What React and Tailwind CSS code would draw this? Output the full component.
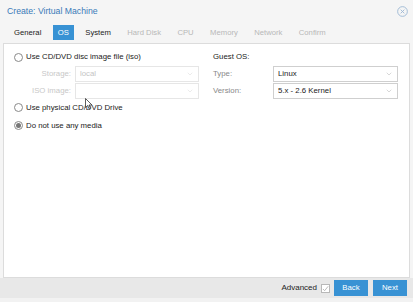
import { ChevronDown } from "lucide-react";

const tabs = [
  { label: "General", state: "done" },
  { label: "OS", state: "active" },
  { label: "System", state: "done" },
  { label: "Hard Disk", state: "off" },
  { label: "CPU", state: "off" },
  { label: "Memory", state: "off" },
  { label: "Network", state: "off" },
  { label: "Confirm", state: "off" },
];

function Radio({ checked, h, children }) {
  return (
    <label className={`flex items-center gap-[3px] ${h} text-[7.8px] text-[#222]`}>
      <span className="w-[9px] h-[9px] rounded-full border border-[#8a8a8a] bg-white flex items-center justify-center">
        {checked && <span className="w-[5px] h-[5px] rounded-full bg-[#777]" />}
      </span>
      {children}
    </label>
  );
}

function Combo({ value, disabled, w }) {
  return (
    <div
      className={`h-[16px] ${w} border flex items-center justify-between pl-[4px] pr-[4px] text-[7.8px] bg-white ${
        disabled ? "border-[#e6e6e6] text-[#c4c4c4]" : "border-[#cfcfcf] text-[#222]"
      }`}
    >
      <span>{value}</span>
      <ChevronDown size={8} strokeWidth={1.5} className={disabled ? "text-[#d8d8d8]" : "text-[#b0b0b0]"} />
    </div>
  );
}

export default function App() {
  return (
    <div
      className="w-[413px] h-[302px] bg-[#f5f5f5] flex flex-col relative overflow-hidden"
      style={{ fontFamily: "'Liberation Sans Narrow', 'Liberation Sans', Arial, sans-serif" }}
    >
      {/* title */}
      <div className="h-[22px] flex items-center justify-between pl-[7px] pr-[5px] pt-[1px]">
        <span className="text-[8.7px] text-[#3a7ab8]">Create: Virtual Machine</span>
        <svg width="11" height="11" viewBox="0 0 12 12" className="text-[#9db8d4]">
          <circle cx="6" cy="6" r="5.3" fill="none" stroke="currentColor" strokeWidth="1" />
          <path d="M4 4l4 4M8 4l-4 4" stroke="currentColor" strokeWidth="1" />
        </svg>
      </div>

      {/* tabs */}
      <div className="h-[21px] flex items-center pl-[9px] gap-[6.4px]">
        {tabs.map((t) => (
          <div
            key={t.label}
            className={`h-[15px] px-[5px] flex items-center text-[7.7px] ${
              t.state === "active"
                ? "bg-[#3892d4] text-white"
                : t.state === "done"
                ? "text-[#222]"
                : "text-[#b8b8b8]"
            }`}
          >
            {t.label}
          </div>
        ))}
      </div>

      {/* body */}
      <div className="mx-[3px] h-[235px] bg-white border border-[#dcdcdc] flex pt-[4px]">
        <div className="w-[203px] pl-[10px]">
          <Radio h="h-[18px]">Use CD/DVD disc image file (iso)</Radio>
          <div className="flex items-center h-[16px]">
            <span className="w-[61px] text-right pr-[4px] text-[7.8px] text-[#c8c8c8]">Storage:</span>
            <Combo value="local" disabled w="w-[124px]" />
          </div>
          <div className="flex items-center h-[16px] mt-[1px]">
            <span className="w-[61px] text-right pr-[4px] text-[7.8px] text-[#c8c8c8]">ISO image:</span>
            <Combo value="" disabled w="w-[124px]" />
          </div>
          <Radio h="h-[17px]">Use physical CD/DVD Drive</Radio>
          <Radio checked h="h-[19px]">Do not use any media</Radio>
        </div>
        <div className="flex-1 pl-[6px]">
          <div className="h-[18px] flex items-center text-[7.8px] text-[#222]">Guest OS:</div>
          <div className="flex items-center h-[16px]">
            <span className="w-[60px] text-[7.8px] text-[#888]">Type:</span>
            <Combo value="Linux" w="w-[125px]" />
          </div>
          <div className="flex items-center h-[16px] mt-[1px]">
            <span className="w-[60px] text-[7.8px] text-[#888]">Version:</span>
            <Combo value="5.x - 2.6 Kernel" w="w-[125px]" />
          </div>
        </div>
      </div>

      {/* footer */}
      <div className="h-[20px] bg-[#e8e8e8] flex items-center justify-end pr-[6px]">
        <span className="text-[8px] text-[#222] mr-[4px]">Advanced</span>
        <span className="w-[9px] h-[9px] border border-[#b8b8b8] bg-white flex items-center justify-center mr-[4px]">
          <svg width="7" height="7" viewBox="0 0 8 8">
            <path d="M1 4.5l2 2 4-5" stroke="#b0b0b0" strokeWidth="1" fill="none" />
          </svg>
        </span>
        <button className="w-[34px] h-[16px] bg-[#3892d4] text-white text-[7.8px] mr-[5px]">Back</button>
        <button className="w-[34px] h-[16px] bg-[#3892d4] text-white text-[7.8px]">Next</button>
      </div>
      <div className="flex-1 bg-[#f2f2f2]" />

      {/* mouse pointer */}
      <svg className="absolute left-[85px] top-[98px]" width="8" height="12" viewBox="0 0 8 12">
        <path d="M0.5 0.5v9l2.2-2 1.5 3.4 1.3-.6-1.5-3.3h3z" fill="#fff" stroke="#333" strokeWidth="0.8" />
      </svg>
    </div>
  );
}
